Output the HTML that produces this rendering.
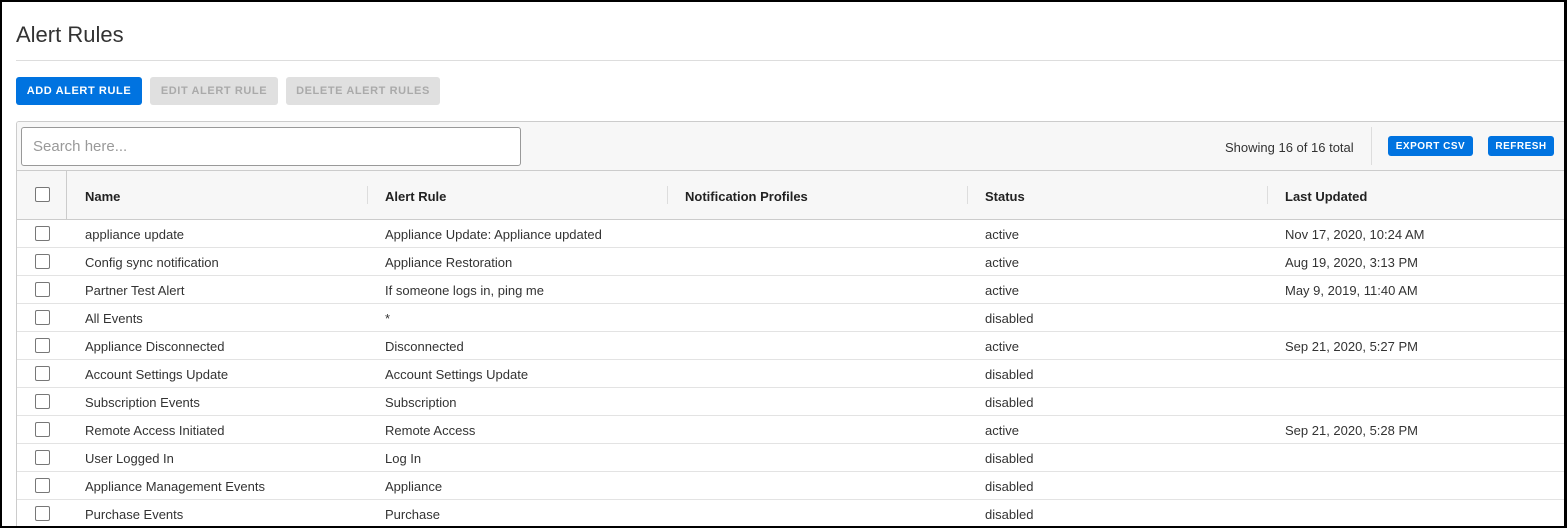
<!DOCTYPE html>
<html><head><style>
*{box-sizing:border-box;margin:0;padding:0}
body{width:1567px;height:528px;overflow:hidden;background:#000;font-family:"Liberation Sans",sans-serif;}
.page{position:absolute;left:2px;top:2px;width:1562px;height:524px;background:#fff;overflow:hidden}
h1{position:absolute;left:14px;top:20px;font-size:22px;font-weight:normal;color:#333}
.hr{position:absolute;left:14px;right:0;top:58px;border-top:1px solid #ddd}
.btn{position:absolute;top:75px;height:28px;border-radius:3px;font-size:11px;font-weight:bold;letter-spacing:.6px;line-height:29px;text-align:center}
.tbl{position:absolute;left:14px;top:119px;width:1560px;border:1px solid #ccc;border-right:none;border-radius:3px 0 0 0;height:420px;overflow:hidden}
.bar{height:49px;background:#f7f7f7;border-bottom:1px solid #ccc;position:relative}
.search{position:absolute;left:4px;top:5px;width:500px;height:39px;border:1px solid #999;border-radius:3px;background:#fff;font-size:15px;color:#999;padding:10px 11px}
.cnt{position:absolute;left:1208px;top:18px;font-size:13px;color:#333}
.sep{position:absolute;left:1354px;top:5px;height:38px;border-left:1px solid #ddd}
.sb{position:absolute;top:14px;height:20px;background:#0073e0;color:#fff;border-radius:3px;font-size:10px;font-weight:bold;letter-spacing:.5px;line-height:21px;text-align:center}
.row{height:28px;border-bottom:1px solid #e3e3e3;position:relative;font-size:13px;color:#333}
.hd{height:49px;background:#f7f7f7;border-bottom:1px solid #ccc;font-weight:bold;font-size:13px;color:#222}
.c{position:absolute;top:7px}
.hd .c{top:18px}
.cb{position:absolute;left:18px;top:6px;width:15px;height:15px;border:1.5px solid #777;border-radius:2px;background:#fff}
.hd .cb{top:16px}
.vl{position:absolute;left:49px;top:0;bottom:-1px;border-left:1px solid #ccc}
.hs{position:absolute;top:15px;height:18px;border-left:1px solid #ddd}
</style></head><body><div class="page">
<h1>Alert Rules</h1><div class="hr"></div>
<div class="btn" style="left:14px;width:126px;background:#0073e0;color:#fff">ADD ALERT RULE</div>
<div class="btn" style="left:148px;width:128px;background:#e0e0e0;color:#aaa">EDIT ALERT RULE</div>
<div class="btn" style="left:284px;width:154px;background:#e0e0e0;color:#aaa">DELETE ALERT RULES</div>
<div class="tbl">
<div class="bar"><div class="search">Search here...</div><div class="cnt">Showing 16 of 16 total</div><div class="sep"></div>
<div class="sb" style="left:1371px;width:85px">EXPORT CSV</div><div class="sb" style="left:1471px;width:66px">REFRESH</div></div>
<div class="row hd"><div class="cb"></div><div class="vl"></div>
<div class="c" style="left:68px">Name</div><div class="hs" style="left:350px"></div>
<div class="c" style="left:368px">Alert Rule</div><div class="hs" style="left:650px"></div>
<div class="c" style="left:668px">Notification Profiles</div><div class="hs" style="left:950px"></div>
<div class="c" style="left:968px">Status</div><div class="hs" style="left:1250px"></div>
<div class="c" style="left:1268px">Last Updated</div></div>
<div class="row"><div class="cb"></div><div class="c" style="left:68px">appliance update</div><div class="c" style="left:368px">Appliance Update: Appliance updated</div><div class="c" style="left:968px">active</div><div class="c" style="left:1268px">Nov 17, 2020, 10:24 AM</div></div>
<div class="row"><div class="cb"></div><div class="c" style="left:68px">Config sync notification</div><div class="c" style="left:368px">Appliance Restoration</div><div class="c" style="left:968px">active</div><div class="c" style="left:1268px">Aug 19, 2020, 3:13 PM</div></div>
<div class="row"><div class="cb"></div><div class="c" style="left:68px">Partner Test Alert</div><div class="c" style="left:368px">If someone logs in, ping me</div><div class="c" style="left:968px">active</div><div class="c" style="left:1268px">May 9, 2019, 11:40 AM</div></div>
<div class="row"><div class="cb"></div><div class="c" style="left:68px">All Events</div><div class="c" style="left:368px">*</div><div class="c" style="left:968px">disabled</div></div>
<div class="row"><div class="cb"></div><div class="c" style="left:68px">Appliance Disconnected</div><div class="c" style="left:368px">Disconnected</div><div class="c" style="left:968px">active</div><div class="c" style="left:1268px">Sep 21, 2020, 5:27 PM</div></div>
<div class="row"><div class="cb"></div><div class="c" style="left:68px">Account Settings Update</div><div class="c" style="left:368px">Account Settings Update</div><div class="c" style="left:968px">disabled</div></div>
<div class="row"><div class="cb"></div><div class="c" style="left:68px">Subscription Events</div><div class="c" style="left:368px">Subscription</div><div class="c" style="left:968px">disabled</div></div>
<div class="row"><div class="cb"></div><div class="c" style="left:68px">Remote Access Initiated</div><div class="c" style="left:368px">Remote Access</div><div class="c" style="left:968px">active</div><div class="c" style="left:1268px">Sep 21, 2020, 5:28 PM</div></div>
<div class="row"><div class="cb"></div><div class="c" style="left:68px">User Logged In</div><div class="c" style="left:368px">Log In</div><div class="c" style="left:968px">disabled</div></div>
<div class="row"><div class="cb"></div><div class="c" style="left:68px">Appliance Management Events</div><div class="c" style="left:368px">Appliance</div><div class="c" style="left:968px">disabled</div></div>
<div class="row"><div class="cb"></div><div class="c" style="left:68px">Purchase Events</div><div class="c" style="left:368px">Purchase</div><div class="c" style="left:968px">disabled</div></div>
</div></div></body></html>
